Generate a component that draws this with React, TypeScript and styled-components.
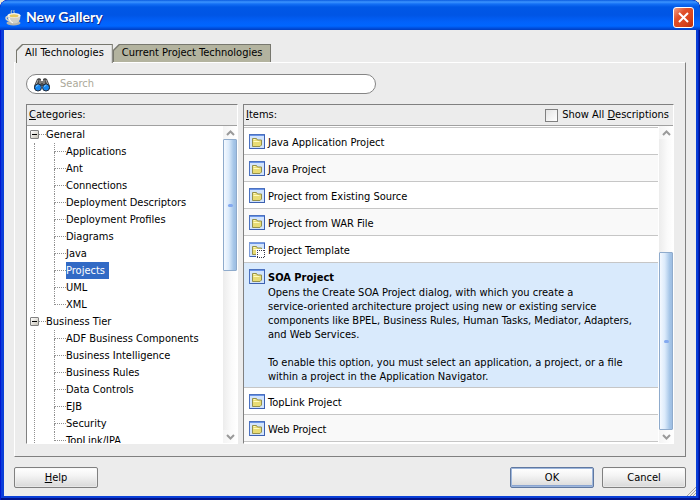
import React, { useState } from "react";
import styled, { createGlobalStyle, css } from "styled-components";

const ui = `"DejaVu Sans Condensed", "DejaVu Sans", sans-serif`;

const GlobalStyle = createGlobalStyle`
  *, *::before, *::after { box-sizing: border-box; }
  body { margin: 0; background: #ece9d8; }
  button, input { font: inherit; color: inherit; margin: 0; padding: 0; border: 0; }
`;

const Dialog = styled.div`
  display: flex;
  flex-direction: column;
  height: 100vh;
  overflow: hidden;
  padding: 0 4px 4px;
  border-radius: 8px 8px 0 0;
  background: #0a3fd8;
  box-shadow: inset 1px 0 #0019cf, inset -1px 0 #00138c, inset 0 -2px #00138c, inset 2px 0 #0a3ae0, inset -2px 0 #0023c0;
  font: 11px/14px ${ui};
  color: #000;
`;

const TitleBar = styled.header`
  display: flex;
  align-items: center;
  flex: none;
  gap: 4px;
  height: 30px;
  margin: 0 -4px;
  padding: 4px 6px 0 5px;
  border-radius: 8px 8px 0 0;
  background: linear-gradient(#0a5be0 0, #3d95ff 2px, #1470f5 4px, #0058e6 7px, #0055e5 15px, #0262fb 22px, #0066ff 26px, #0050e0 28px, #003dc0 30px);
`;

const Title = styled.h1`
  flex: 1;
  margin: 0;
  font: bold 14px/18px Lato, sans-serif;
  color: #fff;
  text-shadow: 1px 1px #0a2a8c;
`;

const CloseButton = styled.button`
  display: grid;
  place-items: center;
  width: 21px;
  height: 21px;
  border: 1px solid #fff;
  border-radius: 3px;
  background: linear-gradient(135deg, #f0a088, #e0512c 35%, #d8431c 70%, #b8300c);
`;

const Content = styled.main`
  display: flex;
  flex-direction: column;
  flex: 1;
  min-height: 0;
  padding: 14px 10px 8px;
  background: #ececec;
`;

const Tabs = styled.div`
  display: flex;
  flex: none;
  padding-left: 2px;
`;

const TabEdge = styled.button<{ $active: boolean }>`
  position: relative;
  z-index: 1;
  height: ${(p) => (p.$active ? 19 : 18)}px;
  margin-bottom: ${(p) => (p.$active ? -1 : 0)}px;
  padding: 1px 1px 0;
  background: #77776e;
  clip-path: polygon(6px 0, 100% 0, 100% 100%, 0 100%, 0 6px);
`;

const TabFace = styled.span<{ $active: boolean }>`
  display: block;
  height: 100%;
  padding: 1px 8px 0;
  background: ${(p) => (p.$active ? "#ececec" : "#b3b39f")};
  clip-path: polygon(6px 0, 100% 0, 100% 100%, 0 100%, 0 6px);
  white-space: nowrap;
`;

const Panel = styled.section`
  display: flex;
  flex-direction: column;
  flex: 1;
  gap: 10px;
  min-height: 0;
  padding: 11px 11px 12px;
  border: 1px solid #fff;
  border-right-color: #808080;
  border-bottom-color: #808080;
`;

const SearchBox = styled.label`
  display: flex;
  align-items: center;
  flex: none;
  gap: 10px;
  width: 54%;
  height: 20px;
  padding: 0 8px 0 7px;
  border: 1px solid #858585;
  border-radius: 10px;
  background: #fff;
`;

const SearchInput = styled.input`
  flex: 1;
  min-width: 0;
  background: none;
  outline: none;
  &::placeholder { color: #aca899; opacity: 1; }
`;

const Columns = styled.div`
  display: grid;
  grid-template-columns: 212px minmax(0, 1fr);
  grid-template-rows: minmax(0, 1fr);
  gap: 5px;
  flex: 1;
  min-height: 0;
`;

const Pane = styled.section`
  display: flex;
  flex-direction: column;
  min-width: 0;
  min-height: 0;
  border: 1px solid #fff;
  border-top-color: #808080;
  border-left-color: #808080;
`;

const PaneHeader = styled.div`
  display: flex;
  align-items: center;
  justify-content: space-between;
  flex: none;
  height: 21px;
  padding: 0 4px 0 2px;
  border-bottom: 1px solid #a0a0a0;
`;

const PaneTitle = styled.h2`
  margin: 0;
  font: inherit;
`;

const CheckLabel = styled.label`
  display: flex;
  align-items: center;
  gap: 4px;
`;

const CheckBox = styled.input`
  appearance: none;
  width: 13px;
  height: 13px;
  border: 1px solid #808080;
  background: linear-gradient(135deg, #e4e4e4, #fff);
  &:checked { background: #316ac5; box-shadow: inset 0 0 0 2px #fff; }
`;

const PaneBody = styled.div`
  display: flex;
  flex: 1;
  min-height: 0;
  background: #fff;
`;

const Tree = styled.ul`
  flex: 1;
  min-width: 0;
  overflow: hidden;
  margin: 0;
  padding: 0;
  list-style: none;
`;

const GroupRow = styled.div`
  display: flex;
  align-items: center;
  height: 17px;
  padding-left: 3px;
`;

const Toggle = styled.button`
  display: grid;
  place-items: center;
  width: 9px;
  height: 9px;
  border: 1px solid #808080;
  border-radius: 1px;
  background: linear-gradient(135deg, #fff, #c8c4b8);
`;

const Stem = styled.span`
  width: 7px;
  border-top: 1px dotted #909090;
`;

const Branches = styled.ul`
  margin: 0 0 0 7px;
  padding: 0 0 0 19px;
  border-left: 1px dotted #909090;
  list-style: none;
`;

const Leaf = styled.li`
  display: flex;
  height: 17px;
`;

const Elbow = styled.span<{ $last: boolean }>`
  flex: none;
  width: 12px;
  &::before, &::after {
    content: "";
    display: block;
    border-left: 1px dotted #909090;
  }
  &::before { height: 9px; border-bottom: 1px dotted #909090; }
  &::after { height: 8px; ${(p) => p.$last && css`border: 0;`} }
`;

const LeafLabel = styled.span<{ $selected: boolean }>`
  padding-right: 4px;
  line-height: 17px;
  white-space: nowrap;
  cursor: default;
  ${(p) => p.$selected && css`background: #316ac5; color: #fff;`}
`;

const Track = styled.div`
  display: flex;
  flex-direction: column;
  flex: none;
  width: 14px;
  background: linear-gradient(90deg, #ececec, #fafafa 60%, #fff);
`;

const ArrowButton = styled.button`
  display: grid;
  place-items: center;
  flex: none;
  width: 14px;
  height: 13px;
  background: linear-gradient(90deg, #f4f4f4, #fff);
`;

const TrackSpace = styled.div<{ $share: number }>`
  flex: ${(p) => p.$share} 1 0;
`;

const Thumb = styled.div<{ $share: number }>`
  display: grid;
  place-items: center;
  flex: ${(p) => p.$share} 1 0;
  border: 1px solid #8fabcc;
  border-radius: 1px;
  background: linear-gradient(90deg, #f4f9ff, #dcebfb 40%, #a6c6e8 80%, #9dbde2);
  &::after {
    content: "";
    width: 5px;
    height: 3px;
    border-radius: 2px;
    background: #84aaf0;
  }
`;

const ItemList = styled.ul`
  flex: 1;
  min-width: 0;
  overflow: hidden;
  margin: 1px 1px 0 0;
  padding: 0;
  border-top: 1px solid #c6c6c6;
  list-style: none;
`;

const Item = styled.li<{ $selected: boolean }>`
  display: flex;
  gap: 3px;
  padding: ${(p) => (p.$selected ? "6px 5px 3px" : "6px 5px 4px")};
  border-bottom: 1px solid #c6c6c6;
  cursor: default;
  &:nth-child(even) { background: #f9f9f9; }
  ${(p) => p.$selected && css`&&& { background: #d9eafc; }`}
  & > svg { flex: none; }
`;

const ItemText = styled.div`
  padding-top: 2px;
`;

const ItemName = styled.div<{ $bold: boolean }>`
  font-weight: ${(p) => (p.$bold ? "bold" : "normal")};
`;

const Description = styled.p`
  margin: 1px 0 14px;
  white-space: pre-line;
  &:last-child { margin: 0; }
`;

const Footer = styled.footer`
  display: flex;
  flex: none;
  gap: 8px;
  padding-top: 10px;
`;

const PushButton = styled.button<{ $primary?: boolean; $start?: boolean }>`
  width: 84px;
  height: 21px;
  margin-right: ${(p) => (p.$start ? "auto" : 0)};
  border: 1px solid ${(p) => (p.$primary ? "#6078a0" : "#808080")};
  border-radius: 2px;
  background: linear-gradient(#fff, #f4f4f4 40%, #d8d8d8);
  box-shadow: ${(p) => (p.$primary ? "inset 0 0 0 1px #9db6dc, inset 0 -2px #8aa4d0" : "inset 0 0 0 1px #f4f4f480")};
`;

const CupIcon = () => (
  <svg width="17" height="17" viewBox="0 0 17 17" aria-hidden="true">
    <path d="M7 5Q5 3 7 1M10 5Q8 3 9 1" stroke="#b8c4c0" fill="none" />
    <ellipse cx="8.500" cy="14" rx="7" ry="2.500" fill="#b4b4ac" />
    <path d="M4 8q-3-1-3 1t4 3" stroke="#d4d4cc" strokeWidth="1.500" fill="none" />
    <path d="M2.500 6.500q0 8 6.500 8t6.500-8z" fill="#d0d0c8" />
    <path d="M4 9q1 4 4 5" stroke="#fff" fill="none" />
    <ellipse cx="9" cy="6.500" rx="6.500" ry="2.500" fill="#f4f4ee" />
    <ellipse cx="9" cy="6.700" rx="4.500" ry="1.500" fill="#e4c860" />
  </svg>
);

const BinocularsIcon = () => (
  <svg width="16" height="15" viewBox="0 0 16 15" aria-hidden="true">
    <path d="M3 2l2-1 2 1v2h2V2l2-1 2 1 3 7v3H9V9H7v3H0V9z" fill="#4c4c4c" />
    <path d="M4 3L2 8M12 3l2 5M7 5h2M6 3v4M10 3v4" stroke="#a8a8a8" fill="none" />
    <circle cx="4" cy="10.500" r="3.500" fill="#1888f0" stroke="#252b38" />
    <circle cx="12" cy="10.500" r="3.500" fill="#1888f0" stroke="#252b38" />
    <path d="M2.500 10q0-2 2-2M10.500 10q0-2 2-2" stroke="#7cc8ff" fill="none" />
  </svg>
);

const ProjectIcon = ({ template = false }: { template?: boolean }) => (
  <svg width="16" height="16" viewBox="0 0 16 16" aria-hidden="true">
    <rect x=".5" y=".5" width="15" height="14" fill="#d2e4fc" stroke={template ? "#7e9cd8" : "#4c72c0"} />
    <path d="M1 1.500h14" stroke="#6a94e8" />
    <path d="M15.500 1v14M1 14.500h15" stroke="#3c60b0" />
    <path d="M3.500 12.500v-8h4l1 1.500h4v5l-1.500 1.500z" fill="#e8dc74" stroke="#94904c" />
    <path d="M4.500 7.500h6M4.500 5.500h2" stroke="#fffbc0" />
    {template && (
      <>
        <path d="M7 7h9v9H7z" fill="#fff" />
        <path d="M8 8.500h8M8 15.500h8M8.500 8v8M15.500 8v8" stroke="#383848" strokeDasharray="1 1" />
      </>
    )}
  </svg>
);

const Chevron = ({ down = false }: { down?: boolean }) => (
  <svg width="9" height="6" viewBox="0 0 9 6" aria-hidden="true">
    <path d={down ? "M1 1l3.500 3.500L8 1" : "M1 5l3.500-3.500L8 5"} fill="none" stroke="#9a9a9a" strokeWidth="2" />
  </svg>
);

const GripIcon = styled.svg.attrs({ width: 9, height: 9, viewBox: "0 0 9 9", "aria-hidden": true })`
  position: absolute;
  right: 4px;
  bottom: 4px;
`;

const ScrollBar = ({ before, thumb, after }: { before: number; thumb: number; after: number }) => (
  <Track>
    <ArrowButton type="button" aria-label="Scroll up" tabIndex={-1}><Chevron /></ArrowButton>
    <TrackSpace $share={before} />
    <Thumb $share={thumb} />
    <TrackSpace $share={after} />
    <ArrowButton type="button" aria-label="Scroll down" tabIndex={-1}><Chevron down /></ArrowButton>
  </Track>
);

const categories = [
  { name: "General", children: ["Applications", "Ant", "Connections", "Deployment Descriptors", "Deployment Profiles", "Diagrams", "Java", "Projects", "UML", "XML"] },
  { name: "Business Tier", children: ["ADF Business Components", "Business Intelligence", "Business Rules", "Data Controls", "EJB", "Security", "TopLink/JPA"] },
];

const items: { name: string; template?: boolean; description?: string[] }[] = [
  { name: "Java Application Project" },
  { name: "Java Project" },
  { name: "Project from Existing Source" },
  { name: "Project from WAR File" },
  { name: "Project Template", template: true },
  {
    name: "SOA Project",
    description: [
      "Opens the Create SOA Project dialog, with which you create a\nservice-oriented architecture project using new or existing service\ncomponents like BPEL, Business Rules, Human Tasks, Mediator, Adapters,\nand Web Services.",
      "To enable this option, you must select an application, a project, or a file\nwithin a project in the Application Navigator.",
    ],
  },
  { name: "TopLink Project" },
  { name: "Web Project" },
];

const tabs = ["All Technologies", "Current Project Technologies"];

export default function App() {
  const [tab, setTab] = useState(tabs[0]);
  const [category, setCategory] = useState("Projects");
  const [item, setItem] = useState("SOA Project");

  return (
    <>
      <GlobalStyle />
      <Dialog role="dialog" aria-labelledby="dialog-title">
        <TitleBar>
          <CupIcon />
          <Title id="dialog-title">New Gallery</Title>
          <CloseButton type="button" aria-label="Close">
            <svg width="13" height="13" viewBox="0 0 13 13" aria-hidden="true">
              <path d="M2 2l9 9M11 2l-9 9" stroke="#fff" strokeWidth="2" />
            </svg>
          </CloseButton>
        </TitleBar>
        <Content>
          <Tabs role="tablist">
            {tabs.map((name) => (
              <TabEdge key={name} type="button" role="tab" aria-selected={tab === name} $active={tab === name} onClick={() => setTab(name)}>
                <TabFace $active={tab === name}>{name}</TabFace>
              </TabEdge>
            ))}
          </Tabs>
          <Panel role="tabpanel">
            <SearchBox>
              <BinocularsIcon />
              <SearchInput type="text" placeholder="Search" aria-label="Search" />
            </SearchBox>
            <Columns>
              <Pane>
                <PaneHeader><PaneTitle><u>C</u>ategories:</PaneTitle></PaneHeader>
                <PaneBody>
                  <Tree role="tree" aria-label="Categories">
                    {categories.map((group) => (
                      <li key={group.name} role="treeitem" aria-expanded="true">
                        <GroupRow>
                          <Toggle type="button" aria-label={`Collapse ${group.name}`}>
                            <svg width="5" height="1" aria-hidden="true"><path d="M0 .5h5" stroke="#000" /></svg>
                          </Toggle>
                          <Stem />
                          {group.name}
                        </GroupRow>
                        <Branches role="group">
                          {group.children.map((name, i) => (
                            <Leaf key={name} role="treeitem" aria-selected={category === name} onClick={() => setCategory(name)}>
                              <Elbow $last={i === group.children.length - 1} />
                              <LeafLabel $selected={category === name}>{name}</LeafLabel>
                            </Leaf>
                          ))}
                        </Branches>
                      </li>
                    ))}
                  </Tree>
                  <ScrollBar before={0} thumb={131} after={160} />
                </PaneBody>
              </Pane>
              <Pane>
                <PaneHeader>
                  <PaneTitle><u>I</u>tems:</PaneTitle>
                  <CheckLabel>
                    <CheckBox type="checkbox" />
                    <span>Show All <u>D</u>escriptions</span>
                  </CheckLabel>
                </PaneHeader>
                <PaneBody>
                  <ItemList role="listbox" aria-label="Items">
                    {items.map((entry) => (
                      <Item key={entry.name} role="option" aria-selected={item === entry.name} $selected={item === entry.name} onClick={() => setItem(entry.name)}>
                        <ProjectIcon template={entry.template} />
                        <ItemText>
                          <ItemName $bold={item === entry.name}>{entry.name}</ItemName>
                          {item === entry.name && entry.description?.map((text) => <Description key={text}>{text}</Description>)}
                        </ItemText>
                      </Item>
                    ))}
                  </ItemList>
                  <ScrollBar before={114} thumb={177} after={0} />
                </PaneBody>
              </Pane>
            </Columns>
          </Panel>
          <Footer>
            <PushButton type="button" $start><u>H</u>elp</PushButton>
            <PushButton type="button" $primary>OK</PushButton>
            <PushButton type="button">Cancel</PushButton>
          </Footer>
        </Content>
        <GripIcon>
          <path d="M0 9L9 0M3 9l6-6M6 9l3-3" stroke="#a8a69c" fill="none" />
        </GripIcon>
      </Dialog>
    </>
  );
}
